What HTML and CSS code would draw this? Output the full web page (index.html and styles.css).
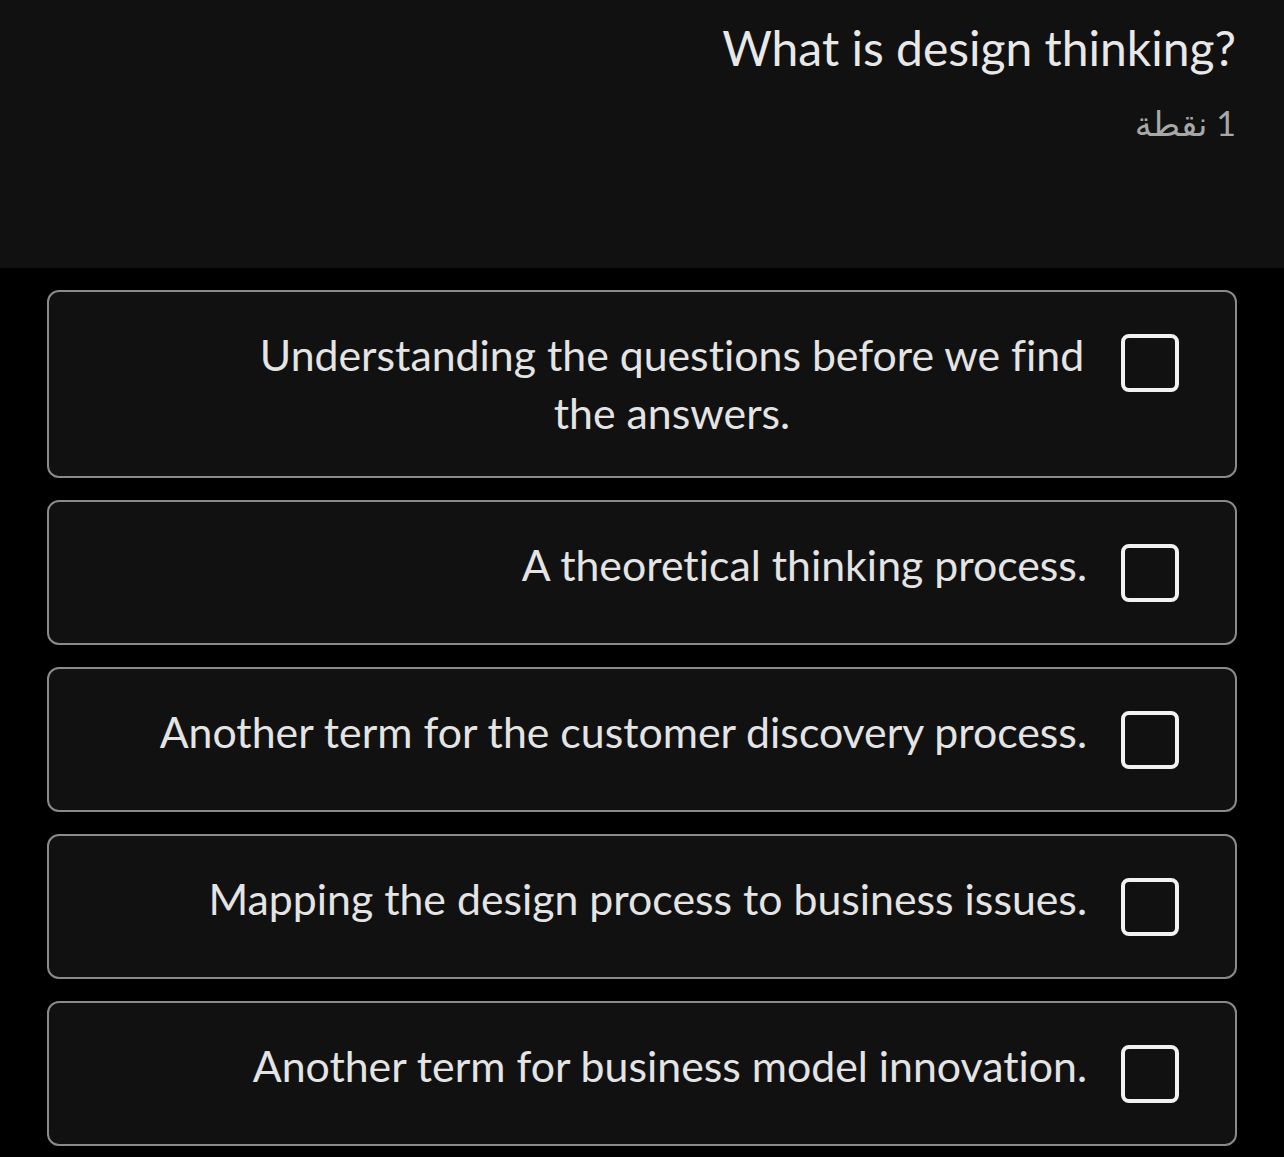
FILE: index.html
```html
<!DOCTYPE html>
<html lang="ar" dir="rtl">
<head>
<meta charset="utf-8">
<title>Quiz</title>
<link rel="stylesheet" href="styles.css">
</head>
<body>
<header class="qhead">
  <h1 class="qtitle" dir="ltr">What is design thinking?</h1>
  <div class="qpoints">1 نقطة</div>
</header>
<main class="options">
  <label class="opt">
    <span class="box"></span>
    <span class="opt-text narrow" dir="ltr">Understanding the questions before we find the answers.</span>
  </label>
  <label class="opt">
    <span class="box"></span>
    <span class="opt-text" dir="ltr">A theoretical thinking process.</span>
  </label>
  <label class="opt">
    <span class="box"></span>
    <span class="opt-text" dir="ltr">Another term for the customer discovery process.</span>
  </label>
  <label class="opt">
    <span class="box"></span>
    <span class="opt-text" dir="ltr">Mapping the design process to business issues.</span>
  </label>
  <label class="opt">
    <span class="box"></span>
    <span class="opt-text" dir="ltr">Another term for business model innovation.</span>
  </label>
</main>
</body>
</html>
```
FILE: styles.css
```css
html, body {
  margin: 0;
  padding: 0;
  background: #000;
}
body {
  font-family: Lato, "DejaVu Sans", sans-serif;
  font-variant-ligatures: none;
  color: #e6e6e6;
  width: 1284px;
  height: 1157px;
  overflow: hidden;
}
.qhead {
  background: #111111;
  height: 268px;
  box-sizing: border-box;
  padding: 18px 48px 0 50px;
  display: flex;
  flex-direction: column;
  align-items: flex-start;
}
.qtitle {
  margin: 0;
  font-weight: 400;
  font-size: 48px;
  line-height: 60px;
  color: #e8e8e8;
}
.qpoints {
  margin-top: 26px;
  font-size: 34px;
  line-height: 38px;
  color: #a8a8a8;
}
.options {
  display: flex;
  flex-direction: column;
  gap: 22px;
  padding: 22px 47px 0 47px;
}
.opt {
  display: flex;
  align-items: flex-start;
  gap: 34px;
  border: 2px solid #8a8a8a;
  border-radius: 12px;
  background: #111111;
  padding: 34px 56px 34px 40px;
}
.box {
  flex: none;
  width: 50px;
  height: 50px;
  border: 4px solid #f2f2f2;
  border-radius: 8px;
  margin: 8px 0 7px 0;
}
.opt-text {
  font-size: 42.8px;
  line-height: 58px;
  color: #e4e4e4;
  text-align: right;
}
.opt-text.narrow {
  max-width: 830px;
  text-align: center;
}
```
